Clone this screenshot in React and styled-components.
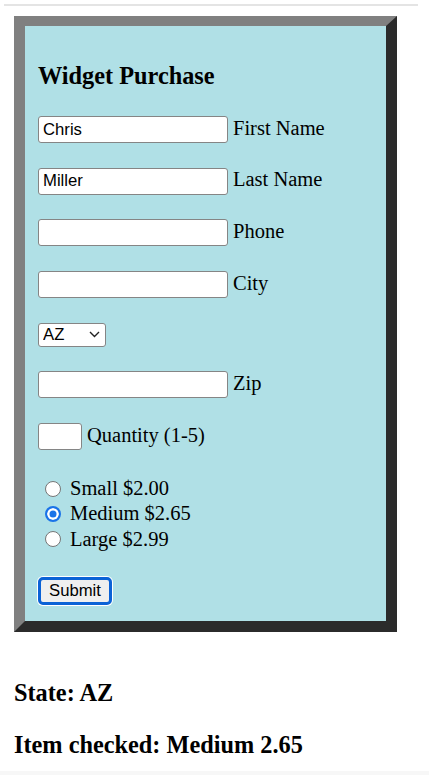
import React, { useState } from 'react';
import styled, { createGlobalStyle } from 'styled-components';

const GlobalStyle = createGlobalStyle`
  html, body {
    margin: 0;
    padding: 0;
    background: #ffffff;
  }
  body {
    font-family: 'Liberation Serif', 'Times New Roman', serif;
    color: #000000;
  }
`;

const Page = styled.div`
  display: flex;
  flex-direction: column;
  align-items: flex-start;
  width: 429px;
  padding-top: 4px;
`;

const TopRule = styled.div`
  width: 414px;
  height: 2px;
  margin-left: 4px;
  background: #e4e4e4;
`;

const Card = styled.form`
  display: flex;
  flex-direction: column;
  align-items: flex-start;
  box-sizing: border-box;
  width: 383px;
  margin: 10px 0 0 14px;
  padding: 12px 13px 16px 13px;
  background: #b0e0e6;
  border-style: solid;
  border-width: 10px 11px 11px 11px;
  border-color: #808080 #2b2b2b #2b2b2b #808080;
`;

const Heading = styled.h3`
  margin: ${(p) => p.top}px 0 0 ${(p) => p.left || 0}px;
  font-family: 'Liberation Serif', 'Times New Roman', serif;
  font-size: 24.3px;
  font-weight: bold;
  line-height: 28px;
  white-space: nowrap;
`;

const Fields = styled.div`
  display: flex;
  flex-direction: column;
  gap: 24.7px;
  margin-top: 26px;
`;

const Row = styled.div`
  display: flex;
  align-items: baseline;
  gap: 5px;
`;

const Label = styled.span`
  font-size: 20.5px;
  line-height: 23px;
`;

const TextInput = styled.input`
  box-sizing: border-box;
  width: ${(p) => p.width || 190}px;
  height: 27px;
  margin: 0;
  padding: 2px 4px;
  font-family: 'Liberation Sans', Arial, sans-serif;
  font-size: 16.7px;
  color: #000000;
  background: #ffffff;
  border: 1px solid #858585;
  border-radius: 3px;
  outline: none;
`;

const SelectWrap = styled.div`
  position: relative;
  display: flex;
  width: 68px;
  height: 24px;
`;

const Select = styled.select`
  appearance: none;
  box-sizing: border-box;
  width: 100%;
  height: 100%;
  margin: 0;
  padding: 0 0 0 4px;
  font-family: 'Liberation Sans', Arial, sans-serif;
  font-size: 16.7px;
  color: #000000;
  background: #ffffff;
  border: 1px solid #858585;
  border-radius: 3px;
  outline: none;
`;

const Chevron = styled.svg`
  position: absolute;
  right: 6px;
  top: 8px;
  pointer-events: none;
`;

const Radios = styled.div`
  display: flex;
  flex-direction: column;
  margin-top: 25.8px;
`;

const RadioRow = styled.label`
  display: flex;
  align-items: center;
  height: 25.3px;
  font-size: 20.5px;
  line-height: 25.3px;
`;

const Radio = styled.input`
  appearance: none;
  box-sizing: border-box;
  flex: none;
  width: 16px;
  height: 16px;
  margin: 0 9px 0 7px;
  background: #ffffff;
  border: 1px solid #767676;
  border-radius: 50%;

  &:checked {
    background: #1a73e8;
    border: 2px solid #1a73e8;
    box-shadow: inset 0 0 0 2.5px #ffffff;
  }
`;

const SubmitButton = styled.button`
  box-sizing: border-box;
  width: 74px;
  height: 28px;
  margin: 25px 0 0 0;
  padding: 0;
  font-family: 'Liberation Sans', Arial, sans-serif;
  font-size: 16.7px;
  color: #000000;
  background: #efefef;
  border: 3px solid #0b62d6;
  border-radius: 5px;
  box-shadow: 0 0 0 1px #ffffff;
`;

const BottomStrip = styled.div`
  width: 429px;
  height: 4px;
  margin-top: 12px;
  background: #f7f7f7;
`;

const sizes = [
  { key: 'small', label: 'Small $2.00', value: '2.00' },
  { key: 'medium', label: 'Medium $2.65', value: '2.65' },
  { key: 'large', label: 'Large $2.99', value: '2.99' },
];

const App = () => {
  const [first, setFirst] = useState('Chris');
  const [last, setLast] = useState('Miller');
  const [state, setState] = useState('AZ');
  const [size, setSize] = useState('medium');
  const checked = sizes.find((s) => s.key === size);

  return (
    <Page>
      <GlobalStyle />
      <TopRule />
      <Card onSubmit={(e) => e.preventDefault()}>
        <Heading top={24}>Widget Purchase</Heading>
        <Fields>
          <Row>
            <TextInput value={first} onChange={(e) => setFirst(e.target.value)} />
            <Label>First Name</Label>
          </Row>
          <Row>
            <TextInput value={last} onChange={(e) => setLast(e.target.value)} />
            <Label>Last Name</Label>
          </Row>
          <Row>
            <TextInput />
            <Label>Phone</Label>
          </Row>
          <Row>
            <TextInput />
            <Label>City</Label>
          </Row>
          <Row>
            <SelectWrap>
              <Select value={state} onChange={(e) => setState(e.target.value)}>
                <option>AZ</option>
                <option>CA</option>
                <option>NV</option>
                <option>UT</option>
              </Select>
              <Chevron width="11" height="7" viewBox="0 0 11 7">
                <path d="M1 1l4.5 4.5L10 1" fill="none" stroke="#222" strokeWidth="1.4" />
              </Chevron>
            </SelectWrap>
          </Row>
          <Row>
            <TextInput />
            <Label>Zip</Label>
          </Row>
          <Row>
            <TextInput width={44} />
            <Label>Quantity (1-5)</Label>
          </Row>
        </Fields>
        <Radios>
          {sizes.map((s) => (
            <RadioRow key={s.key}>
              <Radio
                type="radio"
                name="size"
                checked={size === s.key}
                onChange={() => setSize(s.key)}
              />
              {s.label}
            </RadioRow>
          ))}
        </Radios>
        <SubmitButton type="submit">Submit</SubmitButton>
      </Card>
      <Heading top={47} left={14}>State: {state}</Heading>
      <Heading top={24} left={14}>
        Item checked: {checked.key.charAt(0).toUpperCase() + checked.key.slice(1)} {checked.value}
      </Heading>
      <BottomStrip />
    </Page>
  );
};

export default App;
